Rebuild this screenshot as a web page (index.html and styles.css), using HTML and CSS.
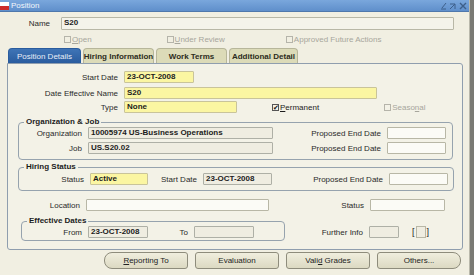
FILE: index.html
```html
<!DOCTYPE html>
<html lang="en">
<head>
    <meta charset="UTF-8">
    <title>Position</title>
    <link rel="stylesheet" href="styles.css">
</head>
<body>
    <div class="window">
        <!-- Title bar -->
        <div class="titlebar">
            <span class="app-icon"></span>
            <span class="title">Position</span>
            <span class="win-btns">
                <svg width="28" height="8" viewBox="0 0 28 8">
                    <path d="M1 7h5M2 6l4-5" stroke="#3d5f8a" stroke-width="1" fill="none"/>
                    <path d="M10 2h5v5M10 7l5-5" stroke="#3d5f8a" stroke-width="1" fill="none"/>
                    <path d="M20 1l6 6M26 1l-6 6" stroke="#3d5f8a" stroke-width="1.4" fill="none"/>
                </svg>
            </span>
        </div>

        <div class="name-row">
            <label class="lbl name-lbl">Name</label>
            <div class="field name-field">S20</div>
        </div>

        <div class="check-row">
            <span class="chk off open-chk"><i></i><u>O</u>pen</span>
            <span class="chk off review-chk"><i></i><u>U</u>nder Review</span>
            <span class="chk off approved-chk"><i></i>Approved Future Actions</span>
        </div>

        <!-- Tabs -->
        <div class="tabs">
            <div class="tab active t1">Position Details</div>
            <div class="tab t2">Hiring Information</div>
            <div class="tab t3">Work Terms</div>
            <div class="tab t4">Additional Detail</div>
        </div>

        <div class="panel">
            <div class="row r-start">
                <label class="lbl w118">Start Date</label>
                <div class="field req w70">23-OCT-2008</div>
            </div>
            <div class="row r-den">
                <label class="lbl w118">Date Effective Name</label>
                <div class="field req w253">S20</div>
            </div>
            <div class="row r-type">
                <label class="lbl w118">Type</label>
                <div class="field req w113">None</div>
                <span class="chk perm"><i class="on">&#10004;</i><u>P</u>ermanent</span>
                <span class="chk off seas"><i></i>Seaso<u>n</u>al</span>
            </div>

            <fieldset class="group org">
                <legend>Organization &amp; Job</legend>
                <div class="row">
                    <label class="lbl w63">Organization</label>
                    <div class="field ro w185">10005974 US-Business Operations</div>
                    <label class="lbl ped1">Proposed End Date</label>
                    <div class="field w59"></div>
                </div>
                <div class="row r-job">
                    <label class="lbl w63">Job</label>
                    <div class="field ro w185">US.S20.02</div>
                    <label class="lbl ped1">Proposed End Date</label>
                    <div class="field w59"></div>
                </div>
            </fieldset>

            <fieldset class="group hiring">
                <legend>Hiring Status</legend>
                <div class="row">
                    <label class="lbl w65">Status</label>
                    <div class="field req w58">Active</div>
                    <label class="lbl sd-lbl">Start Date</label>
                    <div class="field ro w69">23-OCT-2008</div>
                    <label class="lbl ped2">Proposed End Date</label>
                    <div class="field w59"></div>
                </div>
            </fieldset>

            <div class="row r-loc">
                <label class="lbl w74">Location</label>
                <div class="field w182"></div>
                <label class="lbl st-lbl">Status</label>
                <div class="field w75"></div>
            </div>

            <div class="row r-eff">
                <fieldset class="group eff">
                    <legend>Effective Dates</legend>
                    <div class="row">
                        <label class="lbl w63">From</label>
                        <div class="field ro w60">23-OCT-2008</div>
                        <label class="lbl to-lbl">To</label>
                        <div class="field ro w60"></div>
                    </div>
                </fieldset>
                <label class="lbl fi-lbl">Further Info</label>
                <div class="field ro w30"></div>
                <span class="bracket">[<span class="mini"></span>]</span>
            </div>
        </div>

        <div class="buttons">
            <button class="btn first"><u>R</u>eporting To</button>
            <button class="btn">Evaluation</button>
            <button class="btn">Vali<u>d</u> Grades</button>
            <button class="btn last">Others...</button>
        </div>
    </div>
</body>
</html>
```

FILE: styles.css
```css
body {
    margin: 0;
    background-color: #7a7a74;
    font-family: "Liberation Sans", Arial, sans-serif;
    font-size: 8px;
    color: #1c1c1c;
}

u {
    text-decoration: underline;
}

.window {
    width: 470px;
    height: 275px;
    background-color: #f1efe2;
    box-sizing: border-box;
    border-right: 1px solid #b9b8ab;
}

.titlebar {
    height: 12px;
    display: flex;
    align-items: center;
    background: linear-gradient(#7aa7dc, #5f8fcb);
    border-bottom: 1px solid #4f78ac;
    box-sizing: border-box;
}

.app-icon {
    width: 9px;
    height: 8px;
    background: linear-gradient(#ffffff 0 45%, #cc2b2b 45% 100%);
}

.title {
    color: #f2f6fb;
    margin-left: 2px;
    font-size: 8px;
}

.win-btns {
    margin-left: auto;
    margin-right: 1px;
    display: flex;
}

.lbl {
    text-align: right;
    color: #2a2a2a;
    white-space: nowrap;
    flex: none;
}

.field {
    height: 12px;
    box-sizing: border-box;
    border: 1px solid #b8b7a6;
    border-radius: 1px;
    background-color: #fbfbf6;
    font-weight: bold;
    padding: 0 2px;
    line-height: 10px;
    white-space: nowrap;
    overflow: hidden;
    flex: none;
}

.field.req {
    background-color: #fbf6a2;
    border-color: #c9c49a;
}

.field.ro {
    background-color: #efede1;
    border-color: #aeb0a6;
}

.name-row {
    display: flex;
    align-items: center;
    margin-top: 5px;
}

.name-lbl {
    width: 50px;
}

.name-field {
    margin-left: 11px;
    width: 393px;
    height: 13px;
    background-color: #f4f3ea;
}

.check-row {
    display: flex;
    align-items: center;
    height: 13px;
    margin-top: 3px;
}

.chk {
    display: flex;
    align-items: center;
    white-space: nowrap;
    flex: none;
}

.chk i {
    width: 5px;
    height: 5px;
    border: 1px solid #8c8c86;
    margin-right: 1px;
    font-style: normal;
    font-size: 7px;
    line-height: 5px;
    text-align: center;
}

.chk i.on {
    border-color: #555;
    color: #111;
}

.chk.off {
    color: #a7a69c;
}

.chk.off i {
    border-color: #b5b4aa;
}

.open-chk {
    margin-left: 64px;
}

.review-chk {
    margin-left: 75px;
}

.approved-chk {
    margin-left: 61px;
}

.tabs {
    display: flex;
    margin-top: 2px;
    margin-left: 8px;
    height: 15px;
    gap: 2px;
}

.tab {
    background-color: #dcdbb8;
    border: 1px solid #b7b69a;
    border-bottom: none;
    border-radius: 4px 4px 0 0;
    box-sizing: border-box;
    display: flex;
    align-items: center;
    justify-content: center;
    font-weight: bold;
    color: #2c2c20;
    white-space: nowrap;
}

.tab.active {
    background: linear-gradient(#3f74b6, #2a5c9e);
    border-color: #2a5c9e;
    color: #e8eef8;
    font-weight: normal;
}

.t1 { width: 73px; }
.t2 { width: 71px; }
.t3 { width: 71px; }
.t4 { width: 69px; }

.panel {
    margin-left: 7px;
    width: 456px;
    height: 187px;
    box-sizing: border-box;
    border: 1px solid #8f9eae;
    border-radius: 0 3px 3px 3px;
    background-color: #f3f2e7;
    padding-top: 7px;
}

.row {
    display: flex;
    align-items: center;
}

.row .lbl + .field {
    margin-left: 6px;
}

.r-den {
    margin-top: 4px;
}

.r-type {
    margin-top: 2px;
}

.w118 { width: 110px; }
.w63 { width: 63px; }
.w65 { width: 65px; }
.w74 { width: 72px; }
.w70 { width: 70px; }
.w253 { width: 253px; }
.w113 { width: 113px; }
.w185 { width: 185px; }
.w59 { width: 59px; }
.w58 { width: 58px; }
.w69 { width: 69px; }
.w182 { width: 183px; }
.w75 { width: 75px; }
.w60 { width: 60px; }
.w30 { width: 30px; }

.perm {
    margin-left: 35px;
}

.seas {
    margin-left: 65px;
}

.group {
    margin: 0;
    border: 1px solid #96a3ae;
    border-radius: 4px;
    padding: 0 0 0 0;
    box-sizing: border-box;
}

.group legend {
    font-weight: bold;
    padding: 0 2px;
    margin-left: 5px;
    line-height: 8px;
}

.org {
    margin-top: 5px;
    margin-left: 10px;
    width: 435px;
    height: 42px;
    padding-top: 1px;
}

.r-job {
    margin-top: 3px;
}

.ped1 {
    width: 108px;
}

.hiring {
    margin-top: 3px;
    margin-left: 10px;
    width: 436px;
    height: 28px;
    padding-top: 2px;
}

.sd-lbl {
    width: 49px;
}

.ped2 {
    width: 111px;
}

.r-loc {
    margin-top: 8px;
}

.st-lbl {
    width: 95px;
}

.r-eff {
    margin-top: 6px;
}

.eff {
    margin-left: 13px;
    width: 264px;
    height: 24px;
    padding-top: 1px;
}

.eff .w63 {
    width: 60px;
}

.to-lbl {
    width: 40px;
}

.fi-lbl {
    width: 78px;
    margin-top: 6px;
}

.r-eff > .field {
    margin-top: 6px;
}

.bracket {
    margin-left: 13px;
    margin-top: 6px;
    display: flex;
    align-items: center;
    gap: 1px;
    font-size: 9px;
}

.mini {
    width: 10px;
    height: 12px;
    box-sizing: border-box;
    border: 1px solid #b8b7a6;
    background-color: #efede1;
}

.buttons {
    display: flex;
    gap: 7px;
    margin-top: 2px;
    margin-left: 104px;
}

.btn {
    width: 84px;
    height: 17px;
    padding: 0;
    font-family: "Liberation Sans", Arial, sans-serif;
    font-size: 8px;
    color: #222;
    background: linear-gradient(#f0eede, #dcd9c2);
    border: 1px solid #8e8c7c;
    border-radius: 3px;
}

.btn.first {
    border-radius: 8px 3px 3px 8px;
}

.btn.last {
    border-radius: 3px 8px 8px 3px;
}
```
